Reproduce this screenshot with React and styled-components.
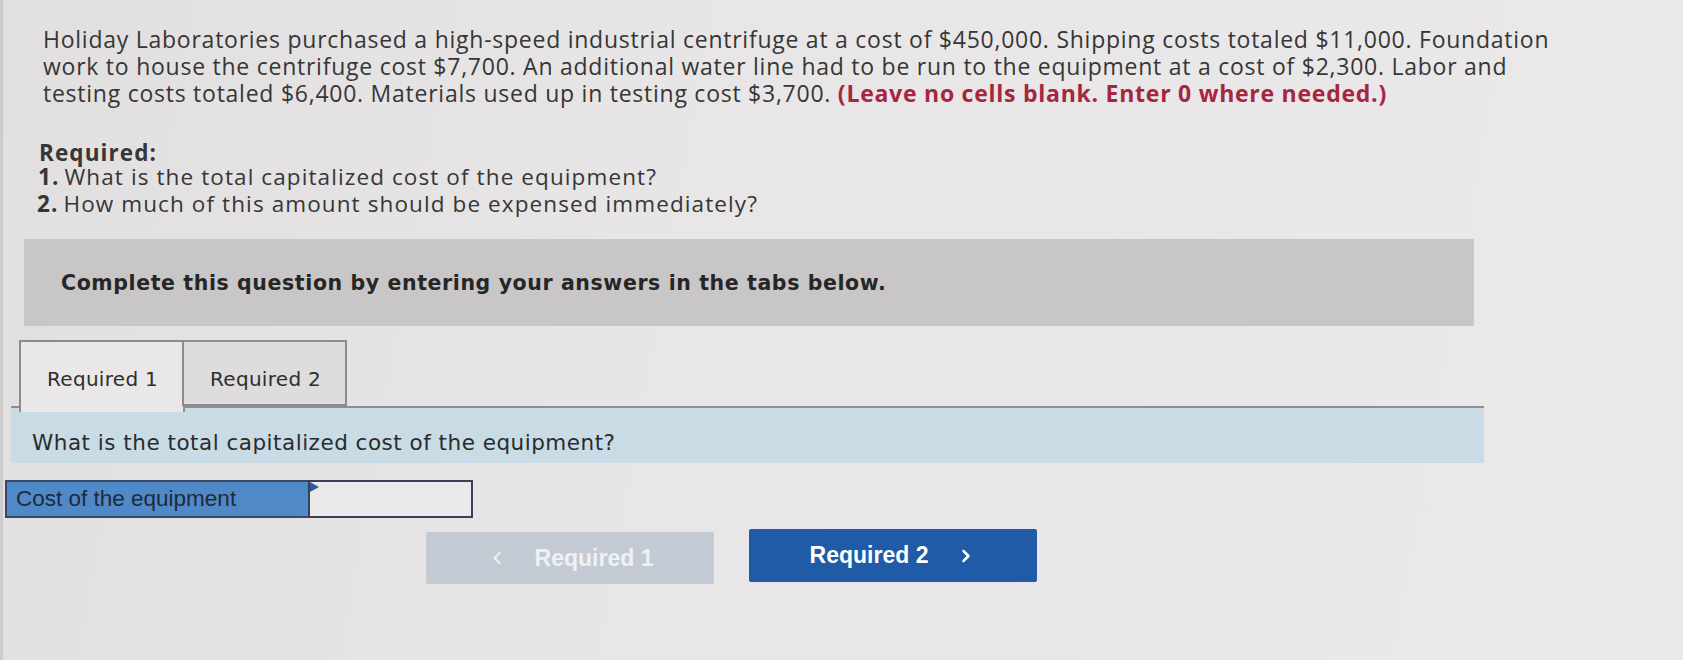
import React from 'react';
import styled, { createGlobalStyle } from 'styled-components';
import { ChevronLeft, ChevronRight } from 'lucide-react';

const Global = createGlobalStyle`
  html, body {
    margin: 0;
    padding: 0;
    background: linear-gradient(100deg, #e1dfe0 0%, #e8e6e7 45%, #eae8e9 100%);
  }
  body {
    font-family: "Open Sans", sans-serif;
    color: #333;
  }
`;

const Page = styled.div`
  width: 1683px;
  height: 660px;
  box-sizing: border-box;
  padding: 26px 0 0 0;
  border-left: 3px solid #cdcbcc;
  overflow: hidden;
`;

const Intro = styled.p`
  margin: 0 0 0 40px;
  width: 1540px;
  font-size: 23px;
  letter-spacing: 0.75px;
  line-height: 27px;
  color: #363636;
`;

const Warn = styled.strong`
  color: #a6253f;
  font-weight: 700;
`;

const Required = styled.div`
  margin: 34px 0 0 36px;
  font-size: 22.5px;
  letter-spacing: 1.1px;
  color: #363636;
`;

const RequiredTitle = styled.div`
  font-weight: 700;
  line-height: 23px;
`;

const List = styled.ol`
  margin: 0;
  padding: 0;
  list-style: none;
  line-height: 26.5px;
`;

const Item = styled.li`
  margin-left: ${(p) => p.$indent}px;

  b {
    font-weight: 700;
    margin-right: 5px;
  }
`;

const Instructions = styled.div`
  margin: 22px 0 0 21px;
  width: 1450px;
  height: 87px;
  display: flex;
  align-items: center;
  box-sizing: border-box;
  padding: 0 0 0 37px;
  background: #c8c6c7;
  font-family: "DejaVu Sans", Verdana, sans-serif;
  font-weight: 700;
  font-size: 20.5px;
  letter-spacing: 0.6px;
  color: #262626;
`;

const TabBar = styled.div`
  display: flex;
  align-items: flex-end;
  margin: 14px 0 0 16px;
  height: 66px;
`;

const Tab = styled.div`
  position: relative;
  z-index: 1;
  box-sizing: border-box;
  width: ${(p) => (p.$active ? 166 : 165)}px;
  height: ${(p) => (p.$active ? 72 : 66)}px;
  margin-bottom: ${(p) => (p.$active ? -6 : 0)}px;
  margin-right: -3px;
  display: flex;
  align-items: center;
  padding: ${(p) => (p.$active ? '4px 0 0 26px' : '12px 0 0 26px')};
  background: ${(p) => (p.$active ? '#e9e7e8' : '#dedcdd')};
  border: 2px solid #8c8c8c;
  border-bottom: ${(p) => (p.$active ? 'none' : '2px solid #8c8c8c')};
  font-family: "DejaVu Sans", Verdana, sans-serif;
  font-size: 20px;
  letter-spacing: 0.3px;
  color: #2e2e2e;
`;

const Panel = styled.div`
  margin-left: 8px;
  width: 1473px;
  height: 57px;
  box-sizing: border-box;
  display: flex;
  align-items: center;
  padding: 14px 0 0 21px;
  background: #c9dbe5;
  border-top: 2px solid #8b9096;
  font-family: "DejaVu Sans", Verdana, sans-serif;
  font-size: 21.5px;
  letter-spacing: 0.5px;
  color: #2b2b2b;
`;

const Row = styled.div`
  display: flex;
  margin: 17px 0 0 2px;
  height: 38px;
`;

const Label = styled.div`
  box-sizing: border-box;
  width: 303px;
  display: flex;
  align-items: center;
  padding-left: 9px;
  background: #4f89c7;
  border: 2px solid #3b4766;
  border-right: none;
  font-family: "Liberation Sans", Arial, sans-serif;
  font-size: 22.5px;
  color: #1f2a3a;
`;

const Cell = styled.div`
  position: relative;
  box-sizing: border-box;
  width: 165px;
  background: #ebe9ea;
  border: 2px solid #3b3f5a;

  &:before {
    content: '';
    position: absolute;
    left: 0;
    top: 0;
    border-top: 5px solid transparent;
    border-bottom: 5px solid transparent;
    border-left: 9px solid #2f5b9a;
  }
`;

const Buttons = styled.div`
  display: flex;
  align-items: flex-start;
  gap: 35px;
  margin: 11px 0 0 423px;
`;

const NavButton = styled.button`
  width: 288px;
  height: ${(p) => (p.$disabled ? 52 : 53)}px;
  margin-top: ${(p) => (p.$disabled ? 3 : 0)}px;
  display: flex;
  align-items: center;
  justify-content: center;
  gap: 28px;
  padding: 0;
  border: none;
  border-radius: 2px;
  background: ${(p) => (p.$disabled ? '#c3cad3' : '#1f5ba6')};
  color: ${(p) => (p.$disabled ? '#eef1f4' : '#ffffff')};
  font-family: "Liberation Sans", Arial, sans-serif;
  font-weight: 700;
  font-size: 23px;
  cursor: ${(p) => (p.$disabled ? 'default' : 'pointer')};

  svg {
    flex-shrink: 0;
  }
`;

export default function App() {
  return (
    <Page>
      <Global />
      <Intro>
        Holiday Laboratories purchased a high-speed industrial centrifuge at a cost of $450,000. Shipping
        costs totaled $11,000. Foundation work to house the centrifuge cost $7,700. An additional water
        line had to be run to the equipment at a cost of $2,300. Labor and testing costs totaled $6,400.
        Materials used up in testing cost $3,700. <Warn>(Leave no cells blank. Enter 0 where needed.)</Warn>
      </Intro>
      <Required>
        <RequiredTitle>Required:</RequiredTitle>
        <List>
          <Item $indent={-1}><b>1.</b>What is the total capitalized cost of the equipment?</Item>
          <Item $indent={-2}><b>2.</b>How much of this amount should be expensed immediately?</Item>
        </List>
      </Required>
      <Instructions>Complete this question by entering your answers in the tabs below.</Instructions>
      <TabBar>
        <Tab $active>Required 1</Tab>
        <Tab>Required 2</Tab>
      </TabBar>
      <Panel>What is the total capitalized cost of the equipment?</Panel>
      <Row>
        <Label>Cost of the equipment</Label>
        <Cell />
      </Row>
      <Buttons>
        <NavButton $disabled disabled>
          <ChevronLeft size={20} strokeWidth={2.5} />
          Required 1
        </NavButton>
        <NavButton>
          Required 2
          <ChevronRight size={20} strokeWidth={3} />
        </NavButton>
      </Buttons>
    </Page>
  );
}
